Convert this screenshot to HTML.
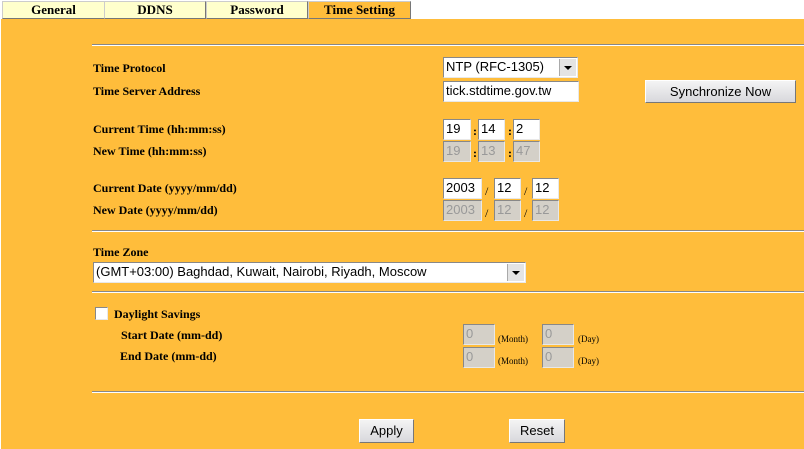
<!DOCTYPE html><html><head><style>
body{margin:0;width:804px;height:449px;background:#fff;position:relative;overflow:hidden;font-family:"Liberation Serif",serif}
.tab{position:absolute;top:1px;height:16px;border:1px solid #777;border-top-color:#ccc;border-left-color:#ccc;background:#ffffcc;font:bold 13px "Liberation Serif",serif;text-align:center;line-height:16px}
.bg{position:absolute;left:1px;top:19px;width:803px;height:430px;background:#ffbd3b}
.hr{position:absolute;left:92px;width:712px;height:1px;background:#888;border-bottom:1px solid #fff}
.l{position:absolute;font:bold 12px "Liberation Serif",serif;line-height:14px}
.in{position:absolute;background:#fff;border:1px solid;border-color:#888 #e8e8e8 #e8e8e8 #888;box-sizing:border-box;font:13px "Liberation Sans",sans-serif;line-height:18px;padding-left:2px;color:#000;overflow:hidden;white-space:nowrap}
.d{background:#d4d0c8;color:#999}
.btn{position:absolute;background:linear-gradient(#f4f4f4,#d8d8dc);border:1px solid;border-color:#fff #777 #777 #fff;box-sizing:border-box;font:13px "Liberation Sans",sans-serif;text-align:center}
.arr{position:absolute;right:1px;top:1px;width:16px;bottom:1px;background:#e4e4e4;border-left:1px solid #aaa}
.arr:after{content:"";position:absolute;left:4px;top:7px;border:4px solid transparent;border-top:4px solid #000;border-bottom:0}
.s{position:absolute;font:bold 12px "Liberation Serif",serif}
.t{position:absolute;font:9px "Liberation Serif",serif}
</style></head><body>
<div class="bg"></div>
<div class="tab" style="left:2px;width:101px">General</div>
<div class="tab" style="left:104px;width:100px">DDNS</div>
<div class="tab" style="left:206px;width:100px">Password</div>
<div class="tab" style="left:308px;width:101px;background:#ffbd3b">Time Setting</div>
<div class="hr" style="top:44px"></div>
<div class="hr" style="top:230px"></div>
<div class="hr" style="top:291px"></div>
<div class="hr" style="top:391px"></div>
<div class="l" style="left:93px;top:61px">Time Protocol</div>
<div class="l" style="left:93px;top:84px">Time Server Address</div>
<div class="l" style="left:93px;top:122px">Current Time (hh:mm:ss)</div>
<div class="l" style="left:93px;top:144px">New Time (hh:mm:ss)</div>
<div class="l" style="left:93px;top:181px">Current Date (yyyy/mm/dd)</div>
<div class="l" style="left:93px;top:203px">New Date (yyyy/mm/dd)</div>
<div class="l" style="left:93px;top:245px">Time Zone</div>
<div class="l" style="left:114px;top:307px">Daylight Savings</div>
<div class="l" style="left:121px;top:328px">Start Date (mm-dd)</div>
<div class="l" style="left:120px;top:349px">End Date (mm-dd)</div>
<div class="in" style="left:443px;top:57px;width:135px;height:21px">NTP (RFC-1305)<div class="arr"></div></div>
<div class="in" style="left:443px;top:81px;width:136px;height:21px">tick.stdtime.gov.tw</div>
<div class="btn" style="left:645px;top:80px;width:151px;height:23px;line-height:21px">Synchronize Now</div>
<div class="in" style="left:443px;top:119px;width:28px;height:21px">19</div>
<div class="in" style="left:478px;top:119px;width:27px;height:21px">14</div>
<div class="in" style="left:513px;top:119px;width:27px;height:21px">2</div>
<div class="in d" style="left:443px;top:141px;width:28px;height:21px">19</div>
<div class="in d" style="left:478px;top:141px;width:27px;height:21px">13</div>
<div class="in d" style="left:513px;top:141px;width:27px;height:21px">47</div>
<div class="s" style="left:473px;top:124px">:</div><div class="s" style="left:508px;top:124px">:</div>
<div class="s" style="left:473px;top:146px">:</div><div class="s" style="left:508px;top:146px">:</div>
<div class="in" style="left:443px;top:178px;width:39px;height:21px">2003</div>
<div class="in" style="left:494px;top:178px;width:27px;height:21px">12</div>
<div class="in" style="left:532px;top:178px;width:27px;height:21px">12</div>
<div class="in d" style="left:443px;top:200px;width:39px;height:21px">2003</div>
<div class="in d" style="left:494px;top:200px;width:27px;height:21px">12</div>
<div class="in d" style="left:532px;top:200px;width:27px;height:21px">12</div>
<div class="s" style="left:485px;top:184px;font-weight:normal">/</div><div class="s" style="left:524px;top:184px;font-weight:normal">/</div>
<div class="s" style="left:485px;top:206px;font-weight:normal">/</div><div class="s" style="left:524px;top:206px;font-weight:normal">/</div>
<div class="in" style="left:93px;top:262px;width:433px;height:21px">(GMT+03:00) Baghdad, Kuwait, Nairobi, Riyadh, Moscow<div class="arr"></div></div>
<div class="in" style="left:95px;top:307px;width:13px;height:13px"></div>
<div class="in d" style="left:463px;top:324px;width:32px;height:21px">0</div>
<div class="in d" style="left:542px;top:324px;width:32px;height:21px">0</div>
<div class="in d" style="left:463px;top:347px;width:32px;height:21px">0</div>
<div class="in d" style="left:542px;top:347px;width:32px;height:21px">0</div>
<div class="t" style="left:498px;top:334px">(Month)</div><div class="t" style="left:578px;top:334px">(Day)</div>
<div class="t" style="left:498px;top:356px">(Month)</div><div class="t" style="left:578px;top:356px">(Day)</div>
<div class="btn" style="left:359px;top:419px;width:55px;height:24px;line-height:22px">Apply</div>
<div class="btn" style="left:509px;top:419px;width:56px;height:24px;line-height:22px">Reset</div>
</body></html>
